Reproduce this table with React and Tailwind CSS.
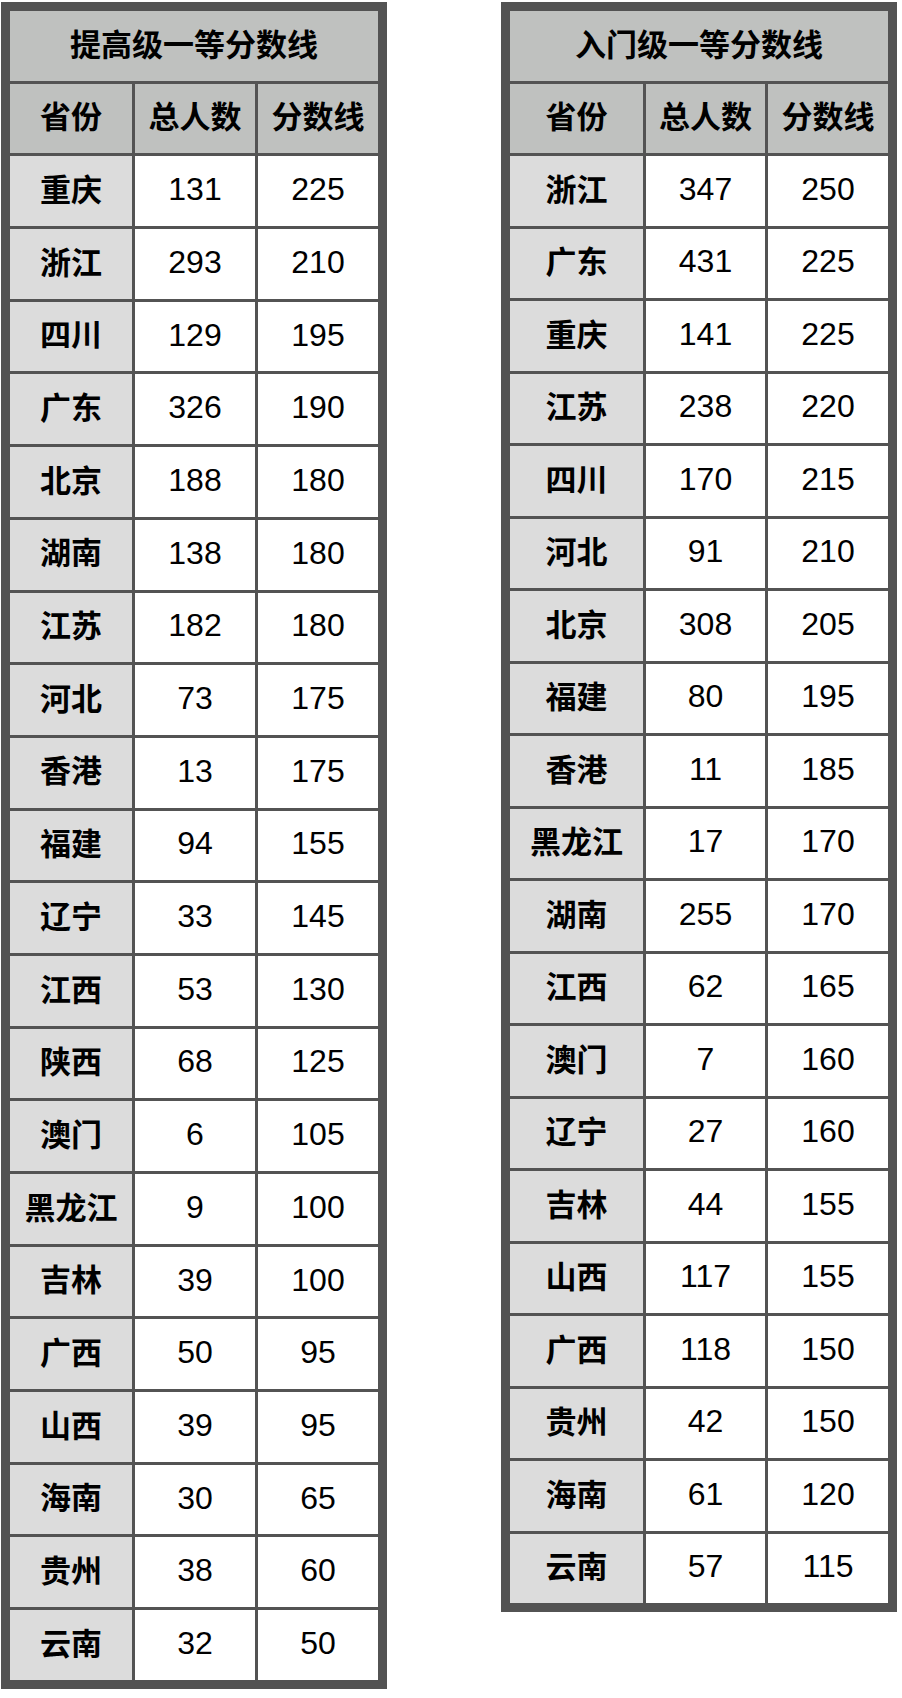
import React from 'react';

const advanced = [
  ['重庆', 131, 225],
  ['浙江', 293, 210],
  ['四川', 129, 195],
  ['广东', 326, 190],
  ['北京', 188, 180],
  ['湖南', 138, 180],
  ['江苏', 182, 180],
  ['河北', 73, 175],
  ['香港', 13, 175],
  ['福建', 94, 155],
  ['辽宁', 33, 145],
  ['江西', 53, 130],
  ['陕西', 68, 125],
  ['澳门', 6, 105],
  ['黑龙江', 9, 100],
  ['吉林', 39, 100],
  ['广西', 50, 95],
  ['山西', 39, 95],
  ['海南', 30, 65],
  ['贵州', 38, 60],
  ['云南', 32, 50],
];

const entry = [
  ['浙江', 347, 250],
  ['广东', 431, 225],
  ['重庆', 141, 225],
  ['江苏', 238, 220],
  ['四川', 170, 215],
  ['河北', 91, 210],
  ['北京', 308, 205],
  ['福建', 80, 195],
  ['香港', 11, 185],
  ['黑龙江', 17, 170],
  ['湖南', 255, 170],
  ['江西', 62, 165],
  ['澳门', 7, 160],
  ['辽宁', 27, 160],
  ['吉林', 44, 155],
  ['山西', 117, 155],
  ['广西', 118, 150],
  ['贵州', 42, 150],
  ['海南', 61, 120],
  ['云南', 57, 115],
];

const ScoreTable = ({ title, rows, cols, rowH }) => (
  <div className="border-[9px] border-[#535353] bg-[#535353]">
    <div className={`grid gap-[3px] ${cols} ${rowH}`}>
      <div className="col-span-3 flex items-center justify-center bg-[#bfc1bf] text-[31px] font-bold">
        {title}
      </div>
      {['省份', '总人数', '分数线'].map((h) => (
        <div key={h} className="flex items-center justify-center bg-[#bfc1bf] text-[31px] font-bold">
          {h}
        </div>
      ))}
      {rows.map(([name, count, score]) => (
        <React.Fragment key={name}>
          <div className="flex items-center justify-center bg-[#dcdcdc] text-[31px] font-bold">
            {name}
          </div>
          <div className="flex items-center justify-center bg-white text-[32px] pb-[4px]">
            {count}
          </div>
          <div className="flex items-center justify-center bg-white text-[32px] pb-[4px]">
            {score}
          </div>
        </React.Fragment>
      ))}
    </div>
  </div>
);

export default function App() {
  return (
    <div
      className="flex items-start gap-[114px] bg-white pl-[1px] pt-[2px] text-black"
      style={{ fontFamily: '"Liberation Sans", "Noto Sans CJK SC", sans-serif' }}
    >
      <ScoreTable
        title="提高级一等分数线"
        rows={advanced}
        cols="grid-cols-[122px_120px_120px]"
        rowH="auto-rows-[69.7px]"
      />
      <ScoreTable
        title="入门级一等分数线"
        rows={entry}
        cols="grid-cols-[133px_119px_120px]"
        rowH="auto-rows-[69.5px]"
      />
    </div>
  );
}
